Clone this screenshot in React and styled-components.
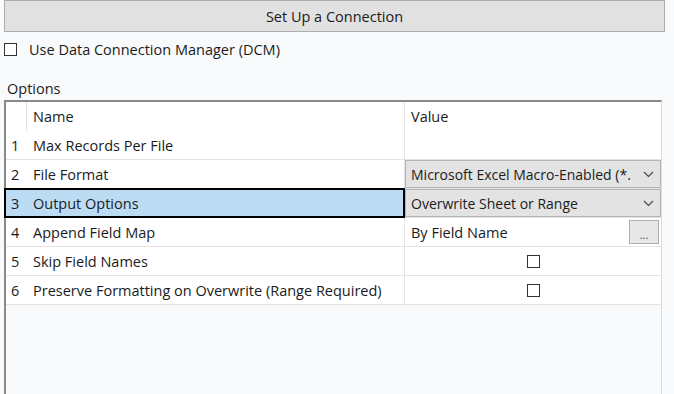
import React from 'react';
import styled, { createGlobalStyle } from 'styled-components';

const Global = createGlobalStyle`
  html, body { margin: 0; padding: 0; background: #f9fafb; }
  body { font-family: "Open Sans", "Noto Sans", Arial, sans-serif; font-size: 14.5px; color: #1b1b1b; }
`;

const Page = styled.div`
  width: 674px;
  height: 394px;
  overflow: hidden;
  display: flex;
  flex-direction: column;
`;

const ConnectButton = styled.div`
  margin: 0 9px 0 4px;
  height: 32px;
  box-sizing: border-box;
  border: 1px solid #adadad;
  background: #e1e1e1;
  display: flex;
  align-items: center;
  justify-content: center;
  padding-top: 1px;
`;

const CheckRow = styled.div`
  display: flex;
  align-items: center;
  gap: 12px;
  margin: 9px 0 0 4px;
  height: 16px;
`;

const Box = styled.span`
  width: 13px;
  height: 13px;
  box-sizing: border-box;
  border: 1px solid #333;
  background: #fff;
  display: inline-block;
`;

const SectionLabel = styled.div`
  margin: 22px 0 0 7px;
  height: 19px;
  line-height: 19px;
`;

const GridPanel = styled.div`
  margin: 2px 0 0 4px;
  width: 658px;
  flex: 1;
  box-sizing: border-box;
  border-top: 2px solid #8a8a8a;
  border-left: 2px solid #8a8a8a;
  border-right: 1px solid #dcdcdc;
  background: #f8f9fa;
  display: flex;
  flex-direction: column;
`;

const Row = styled.div`
  display: grid;
  grid-template-columns: 21px 378px 1fr;
  height: 29px;
  box-sizing: border-box;
  background: #fff;
  border-bottom: ${p => (p.$header ? 'none' : '1px solid #e3e3e3')};
`;

const NumCell = styled.div`
  display: flex;
  align-items: center;
  padding-left: 5px;
  border-right: ${p => (p.$header ? '1px solid #e3e3e3' : '1px solid transparent')};
`;

const NameCell = styled.div`
  display: flex;
  align-items: center;
  padding-left: 6px;
  border-right: 1px solid #e3e3e3;
  white-space: nowrap;
`;

const SelectedCell = styled.div`
  grid-column: 1 / 3;
  margin: -1px 0 -1px -2px;
  box-sizing: border-box;
  border: 2px solid #000;
  background: #bcdcf4;
  display: grid;
  grid-template-columns: 21px 1fr;
  align-items: center;
  white-space: nowrap;
`;

const SelNum = styled.span`
  padding-left: 5px;
`;

const SelName = styled.span`
  padding-left: 6px;
`;

const ValueCell = styled.div`
  display: flex;
  align-items: center;
  justify-content: ${p => (p.$center ? 'center' : 'space-between')};
  padding: ${p => (p.$center ? '0' : '0 2px 0 6px')};
  white-space: nowrap;
`;

const Combo = styled.div`
  align-self: stretch;
  flex: 1;
  margin: 0 -2px 0 -6px;
  box-sizing: border-box;
  border: 1px solid #b4b4b4;
  background: #e3e3e3;
  display: flex;
  align-items: center;
  justify-content: space-between;
  padding: 0 6px 0 5px;
  overflow: hidden;
  font-size: 14px;
`;

const EllipsisBtn = styled.div`
  width: 30px;
  height: 24px;
  box-sizing: border-box;
  border: 1px solid #adadad;
  background: #e8e8e8;
  color: #4a3f6b;
  font-size: 11px;
  display: flex;
  align-items: flex-end;
  justify-content: center;
  padding-bottom: 3px;
  line-height: 1;
`;

const Chevron = () => (
  <svg width="11" height="7" viewBox="0 0 11 7">
    <path d="M1 1 L5.5 5.5 L10 1" fill="none" stroke="#444" strokeWidth="1.1" />
  </svg>
);

const rows = [
  { n: 1, name: 'Max Records Per File', kind: 'empty' },
  { n: 2, name: 'File Format', kind: 'combo', value: 'Microsoft Excel Macro-Enabled (*.' },
  { n: 3, name: 'Output Options', kind: 'combo', value: 'Overwrite Sheet or Range', selected: true },
  { n: 4, name: 'Append Field Map', kind: 'ellipsis', value: 'By Field Name' },
  { n: 5, name: 'Skip Field Names', kind: 'check' },
  { n: 6, name: 'Preserve Formatting on Overwrite (Range Required)', kind: 'check' },
];

function Value({ r }) {
  if (r.kind === 'combo')
    return (
      <ValueCell>
        <Combo>
          <span>{r.value}</span>
          <Chevron />
        </Combo>
      </ValueCell>
    );
  if (r.kind === 'ellipsis')
    return (
      <ValueCell>
        <span>{r.value}</span>
        <EllipsisBtn>...</EllipsisBtn>
      </ValueCell>
    );
  if (r.kind === 'check')
    return (
      <ValueCell $center>
        <Box />
      </ValueCell>
    );
  return <ValueCell />;
}

export default function App() {
  return (
    <Page>
      <Global />
      <ConnectButton>Set Up a Connection</ConnectButton>
      <CheckRow>
        <Box />
        <span>Use Data Connection Manager (DCM)</span>
      </CheckRow>
      <SectionLabel>Options</SectionLabel>
      <GridPanel>
        <Row $header>
          <NumCell $header />
          <NameCell>Name</NameCell>
          <ValueCell>Value</ValueCell>
        </Row>
        {rows.map(r => (
          <Row key={r.n}>
            {r.selected ? (
              <SelectedCell>
                <SelNum>{r.n}</SelNum>
                <SelName>{r.name}</SelName>
              </SelectedCell>
            ) : (
              <>
                <NumCell>{r.n}</NumCell>
                <NameCell>{r.name}</NameCell>
              </>
            )}
            <Value r={r} />
          </Row>
        ))}
      </GridPanel>
    </Page>
  );
}
